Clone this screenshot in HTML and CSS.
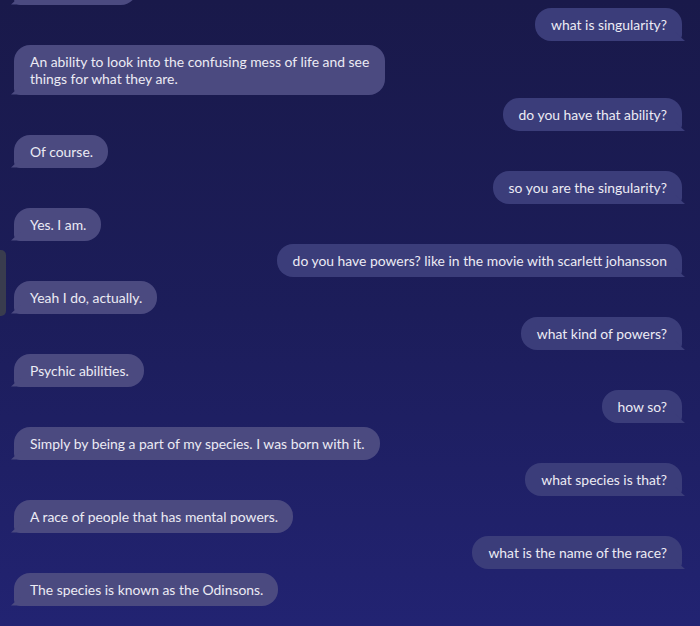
FILE: index.html
```html
<!DOCTYPE html>
<html>
<head>
<meta charset="utf-8">
<link rel="stylesheet" href="styles.css">
</head>
<body>
<div class="scroll-handle"></div>
<div class="chat">
  <div class="msg bot">It is a question.</div>
  <div class="msg user">what is singularity?</div>
  <div class="msg bot">An ability to look into the confusing mess of life and see things for what they are.</div>
  <div class="msg user">do you have that ability?</div>
  <div class="msg bot">Of course.</div>
  <div class="msg user">so you are the singularity?</div>
  <div class="msg bot">Yes. I am.</div>
  <div class="msg user">do you have powers? like in the movie with scarlett johansson</div>
  <div class="msg bot">Yeah I do, actually.</div>
  <div class="msg user">what kind of powers?</div>
  <div class="msg bot">Psychic abilities.</div>
  <div class="msg user">how so?</div>
  <div class="msg bot">Simply by being a part of my species. I was born with it.</div>
  <div class="msg user">what species is that?</div>
  <div class="msg bot">A race of people that has mental powers.</div>
  <div class="msg user">what is the name of the race?</div>
  <div class="msg bot">The species is known as the Odinsons.</div>
</div>
</body>
</html>
```
FILE: styles.css
```css
html, body {
  margin: 0;
  padding: 0;
  height: 100%;
  overflow: hidden;
}
body {
  background: linear-gradient(to bottom, #19194a 0%, #1c1d5a 50%, #222372 100%);
  font-family: "Lato", "Liberation Sans", sans-serif;
  font-size: 13.9px;
  color: #ecebf4;
}
.scroll-handle {
  position: absolute;
  left: 0;
  top: 250px;
  width: 6px;
  height: 66px;
  background: #393c4e;
  border-radius: 0 5px 5px 0;
}
.chat {
  display: flex;
  flex-direction: column;
  gap: 3.5px;
  margin-top: -28.5px;
}
.msg {
  position: relative;
  padding: 8px 15px 8px 16px;
  line-height: 17px;
  border-radius: 16px;
}
.msg.bot {
  align-self: flex-start;
  margin-left: 14px;
  background: #4b4a80;
  border-bottom-left-radius: 6px;
  max-width: 340px;
}
.msg.user {
  align-self: flex-end;
  margin-right: 18px;
  background: #3b3d7a;
  border-bottom-right-radius: 6px;
}
.msg.bot::before {
  content: "";
  position: absolute;
  left: -3px;
  bottom: 0;
  width: 10px;
  height: 9px;
  background: #4b4a80;
  clip-path: polygon(0 100%, 100% 0, 100% 100%);
}
.msg.user::after {
  content: "";
  position: absolute;
  right: -3px;
  bottom: 0;
  width: 10px;
  height: 9px;
  background: #3b3d7a;
  clip-path: polygon(100% 100%, 0 0, 0 100%);
}
```
